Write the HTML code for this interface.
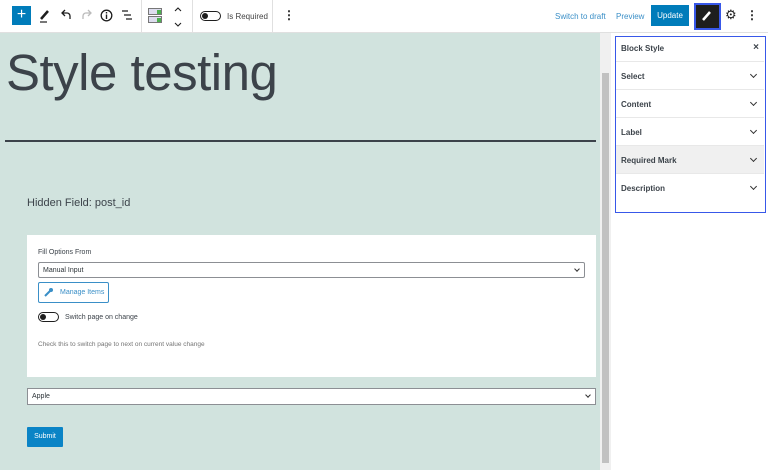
<!DOCTYPE html>
<html><head><style>
*{box-sizing:border-box;margin:0;padding:0}
body{width:768px;height:470px;overflow:hidden;font-family:"Liberation Sans",sans-serif;background:#fff;position:relative;font-size:8px;color:#1e1e1e}
.a{position:absolute}
.tb{left:0;top:0;width:768px;height:33px;background:#fff;border-bottom:1px solid #e0e0e0}
.canvas{left:0;top:33px;width:600px;height:437px;background:#d1e3de}
.sb{left:600px;top:33px;width:11px;height:437px;background:#f0f0f0}
.row{position:absolute;left:0;width:148px;height:28px;border-bottom:1px solid #e8e8e8;font-size:8px;font-weight:bold;color:#3c434a;padding:10px 0 0 5px}
.row .c{position:absolute;right:8px;top:10px;width:5px;height:5px;border-right:1.2px solid #333;border-bottom:1.2px solid #333;transform:rotate(45deg)}
</style></head><body>
<div class="a tb">
 <div class="a" style="left:12px;top:6px;width:19px;height:19px;background:#007cba;color:#fff;font-size:16px;line-height:18px;text-align:center">+</div>
 <svg class="a" style="left:38px;top:8px" width="14" height="16"><path d="M3 11 L10 3" stroke="#1e1e1e" stroke-width="2.5"/><path d="M2 14 H9" stroke="#1e1e1e" stroke-width="1.2"/></svg>
 <svg class="a" style="left:60px;top:9px" width="12" height="12"><path d="M10 10 V7 A3 3 0 0 0 7 4 H2 M5 1 L2 4 L5 7" fill="none" stroke="#1e1e1e" stroke-width="1.3"/></svg>
 <svg class="a" style="left:81px;top:9px" width="12" height="12"><path d="M2 10 V7 A3 3 0 0 1 5 4 H10 M7 1 L10 4 L7 7" fill="none" stroke="#bbb" stroke-width="1.3"/></svg>
 <svg class="a" style="left:100px;top:9px" width="13" height="13"><circle cx="6.5" cy="6.5" r="5.3" fill="none" stroke="#1e1e1e" stroke-width="1.3"/><path d="M6.5 5.5V10M6.5 3v1.5" stroke="#1e1e1e" stroke-width="1.4"/></svg>
 <svg class="a" style="left:121px;top:10px" width="12" height="10"><path d="M1 1H7M3 5H10M5 9H11" stroke="#1e1e1e" stroke-width="1.3"/></svg>
 <div class="a" style="left:141px;top:0;width:1px;height:33px;background:#e0e0e0"></div>
 <div class="a" style="left:148px;top:8px;width:14px;height:7px;border:1px solid #777;background:#dde"></div>
 <div class="a" style="left:148px;top:16px;width:14px;height:7px;border:1px solid #777;background:#dde"></div>
 <div class="a" style="left:157px;top:10px;width:4px;height:4px;background:#4caf50"></div>
 <div class="a" style="left:157px;top:18px;width:4px;height:4px;background:#4caf50"></div>
 <svg class="a" style="left:173px;top:5px" width="10" height="24"><path d="M2 6 L5 3 L8 6M2 18 L5 21 L8 18" fill="none" stroke="#1e1e1e" stroke-width="1.1"/></svg>
 <div class="a" style="left:192px;top:0;width:1px;height:33px;background:#e0e0e0"></div>
 <div class="a" style="left:200px;top:11px;width:21px;height:10px;border:1px solid #1e1e1e;border-radius:6px"></div>
 <div class="a" style="left:202px;top:13px;width:6px;height:6px;border-radius:50%;background:#1e1e1e"></div>
 <div class="a" style="left:227px;top:12px;font-size:8px;color:#444">Is Required</div>
 <div class="a" style="left:272px;top:0;width:1px;height:33px;background:#e0e0e0"></div>
 <div class="a" style="left:283px;top:9px;font-size:12px;line-height:12px;font-weight:bold">⋮</div>
 <div class="a" style="left:555px;top:12px;font-size:8px;color:#3a8fc7">Switch to draft</div>
 <div class="a" style="left:616px;top:12px;font-size:8px;color:#3a8fc7">Preview</div>
 <div class="a" style="left:651px;top:5px;width:38px;height:21px;background:#007cba;color:#fff;font-size:8px;line-height:21px;text-align:center">Update</div>
 <div class="a" style="left:694px;top:3px;width:27px;height:27px;border:2px solid #3858e9;background:#1e1e1e"></div>
 <svg class="a" style="left:700px;top:9px" width="14" height="14"><path d="M3 11 L10 3" stroke="#fff" stroke-width="2.5"/></svg>
 <div class="a" style="left:725px;top:8px;font-size:13px;line-height:14px">⚙</div>
 <div class="a" style="left:746px;top:9px;font-size:12px;line-height:12px;font-weight:bold">⋮</div>
</div>
<div class="a canvas">
 <div class="a" style="left:6px;top:10px;font-size:51px;color:#3c434a;letter-spacing:-0.5px">Style testing</div>
 <div class="a" style="left:5px;top:107px;width:591px;height:2px;background:#3c434a"></div>
 <div class="a" style="left:27px;top:164px;font-size:11px;color:#3c434a">Hidden Field: post_id</div>
 <div class="a" style="left:27px;top:202px;width:569px;height:142px;background:#fff">
  <div class="a" style="left:11px;top:14px;font-size:7px;color:#3c434a">Fill Options From</div>
  <div class="a" style="left:11px;top:27px;width:547px;height:16px;border:1px solid #8c8f94;border-radius:2px;font-size:7px;padding:4px 0 0 4px;color:#2c3338">Manual Input<div class="a" style="right:5px;top:4px;width:4px;height:4px;border-right:1px solid #333;border-bottom:1px solid #333;transform:rotate(45deg)"></div></div>
  <div class="a" style="left:11px;top:47px;width:71px;height:21px;border:1px solid #3a8fc7;border-radius:2px;font-size:7px;color:#3a8fc7;padding:6px 0 0 21px">Manage Items</div>
  <svg class="a" style="left:17px;top:52px" width="10" height="10"><path d="M1 9 L6 4" stroke="#3a8fc7" stroke-width="2"/><circle cx="7" cy="3" r="2" fill="#3a8fc7"/></svg>
  <div class="a" style="left:11px;top:77px;width:21px;height:10px;border:1px solid #1e1e1e;border-radius:6px"></div>
  <div class="a" style="left:13px;top:79px;width:6px;height:6px;border-radius:50%;background:#1e1e1e"></div>
  <div class="a" style="left:38px;top:79px;font-size:7px;color:#3c434a">Switch page on change</div>
  <div class="a" style="left:11px;top:106px;font-size:6.5px;color:#757575">Check this to switch page to next on current value change</div>
 </div>
 <div class="a" style="left:27px;top:355px;width:569px;height:17px;background:#fff;border:1px solid #8c8f94;font-size:7px;padding:4px 0 0 4px;color:#2c3338">Apple<div class="a" style="right:5px;top:4px;width:4px;height:4px;border-right:1px solid #333;border-bottom:1px solid #333;transform:rotate(45deg)"></div></div>
 <div class="a" style="left:27px;top:394px;width:36px;height:20px;background:#0a84c6;color:#fff;font-size:7px;line-height:20px;text-align:center;border-radius:1px">Submit</div>
</div>
<div class="a sb"><div class="a" style="left:2px;top:40px;width:7px;height:390px;background:#c1c1c1"></div></div>
<div class="a" style="left:615px;top:36px;width:151px;height:177px;border:1.5px solid #3858e9;background:#fff">
 <div class="row" style="top:0;height:25px;padding-top:7px">Block Style<span style="position:absolute;right:5px;top:5px;font-size:10px">×</span></div>
 <div class="row" style="top:25px">Select<span class="c"></span></div>
 <div class="row" style="top:53px">Content<span class="c"></span></div>
 <div class="row" style="top:81px">Label<span class="c"></span></div>
 <div class="row" style="top:109px;background:#f0f0f0">Required Mark<span class="c"></span></div>
 <div class="row" style="top:137px;border:none">Description<span class="c"></span></div>
</div>
</body></html>
